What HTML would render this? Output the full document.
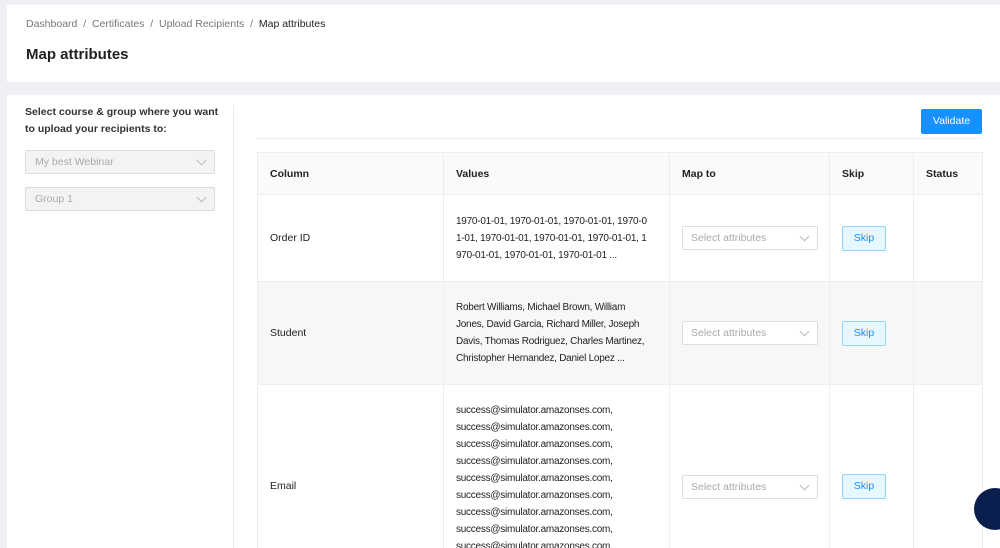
<!DOCTYPE html>
<html><head><style>
*{box-sizing:border-box;margin:0;padding:0}
html,body{width:1000px;height:548px;overflow:hidden}
body{background:#eff0f4;font-family:"Liberation Sans",sans-serif;color:#222;font-size:10.5px;position:relative}
.top{position:absolute;left:7px;top:5px;width:993px;height:77px;background:#fff}
.bc{position:absolute;left:19px;top:13px;color:#777;font-size:10.5px}
.bc b{color:#222;font-weight:normal}
.h1{position:absolute;left:19px;top:41px;font-size:15px;font-weight:bold;color:#222}
.main{position:absolute;left:7px;top:95px;width:993px;height:460px;background:#fff;overflow:hidden}
.side{position:absolute;left:18px;top:9px;width:200px;font-weight:bold;font-size:10.5px;line-height:17px;color:#333}
.vline{position:absolute;left:226px;top:10px;width:1px;height:460px;background:#eee}
.sel{position:absolute;height:24px;border:1px solid #ddd;border-radius:2px;background:#f3f3f3;color:#aaa;padding-left:9px;line-height:22px;font-size:10.5px}
.sel:after{content:"";position:absolute;right:9px;top:6px;width:6px;height:6px;border-right:1px solid #bbb;border-bottom:1px solid #bbb;transform:rotate(45deg)}
.btn{position:absolute;left:914px;top:14px;width:61px;height:25px;background:#1890ff;color:#fff;border-radius:2px;text-align:center;line-height:25px;font-size:10.5px}
.hl{position:absolute;left:249px;top:43px;width:726px;height:1px;background:#eee}
table{position:absolute;left:250px;top:57px;width:725px;border-collapse:collapse;table-layout:fixed}
td,th{border:1px solid #eee;text-align:left;vertical-align:middle;padding:0 12px;font-size:10.5px}
th{height:42px;background:#fafafa;font-weight:bold;color:#222}
td{color:#222;line-height:17px}
td.v{font-size:10px;letter-spacing:-0.25px;padding-right:18px}
td.bk{word-break:break-all}
tr.g td{background:#f7f7f7}
.skip{display:inline-block;width:44px;height:25px;border:1px solid #91d5ff;background:#e6f7ff;color:#1890ff;text-align:center;line-height:23px;border-radius:2px}
.ts{position:relative;width:136px;height:24px;border:1px solid #ddd;border-radius:2px;background:#fff;color:#aaa;padding-left:8px;line-height:22px}
.ts:after{content:"";position:absolute;right:9px;top:6px;width:6px;height:6px;border-right:1px solid #bbb;border-bottom:1px solid #bbb;transform:rotate(45deg)}
.dot{position:absolute;left:974px;top:488px;width:42px;height:42px;border-radius:50%;background:#0b1f4f}
</style></head><body>
<div class="top">
<div class="bc">Dashboard &nbsp;/&nbsp; Certificates &nbsp;/&nbsp; Upload Recipients &nbsp;/&nbsp; <b>Map attributes</b></div>
<div class="h1">Map attributes</div>
</div>
<div class="main">
<div class="side">Select course &amp; group where you want to upload your recipients to:</div>
<div class="sel" style="left:18px;top:55px;width:190px">My best Webinar</div>
<div class="sel" style="left:18px;top:92px;width:190px">Group 1</div>
<div class="vline"></div>
<div class="btn">Validate</div>
<div class="hl"></div>
<table>
<colgroup><col style="width:186px"><col style="width:226px"><col style="width:160px"><col style="width:84px"><col style="width:69px"></colgroup>
<tr><th>Column</th><th>Values</th><th>Map to</th><th>Skip</th><th>Status</th></tr>
<tr style="height:87px"><td>Order ID</td><td class="v bk">1970-01-01, 1970-01-01, 1970-01-01, 1970-01-01, 1970-01-01, 1970-01-01, 1970-01-01, 1970-01-01, 1970-01-01, 1970-01-01 ...</td><td><div class="ts">Select attributes</div></td><td><span class="skip">Skip</span></td><td></td></tr>
<tr class="g" style="height:103px"><td>Student</td><td class="v">Robert Williams, Michael Brown, William Jones, David Garcia, Richard Miller, Joseph Davis, Thomas Rodriguez, Charles Martinez, Christopher Hernandez, Daniel Lopez ...</td><td><div class="ts">Select attributes</div></td><td><span class="skip">Skip</span></td><td></td></tr>
<tr style="height:204px"><td>Email</td><td class="v">success@simulator.amazonses.com, success@simulator.amazonses.com, success@simulator.amazonses.com, success@simulator.amazonses.com, success@simulator.amazonses.com, success@simulator.amazonses.com, success@simulator.amazonses.com, success@simulator.amazonses.com, success@simulator.amazonses.com, success@simulator.amazonses.com ...</td><td><div class="ts">Select attributes</div></td><td><span class="skip">Skip</span></td><td></td></tr>
</table>
</div>
<div class="dot"></div>
</body></html>
